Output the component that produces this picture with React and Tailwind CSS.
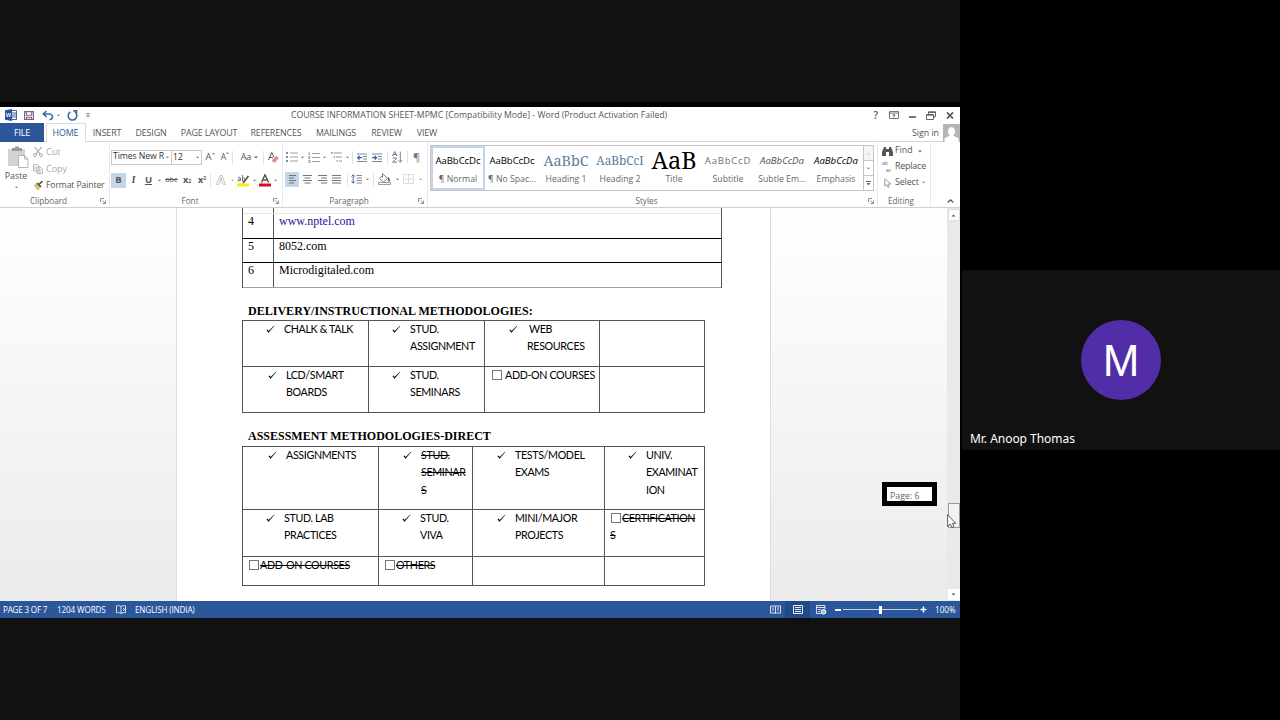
import clsx from 'clsx'

const tabs = [
  { name: 'INSERT', width: 'w-[42px]' },
  { name: 'DESIGN', width: 'w-[46px]' },
  { name: 'PAGE LAYOUT', width: 'w-[70px]' },
  { name: 'REFERENCES', width: 'w-[64px]' },
  { name: 'MAILINGS', width: 'w-[56px]' },
  { name: 'REVIEW', width: 'w-[45px]' },
  { name: 'VIEW', width: 'w-[36px]' }
]

const styles = [
  { name: '¶ Normal', sample: 'AaBbCcDc', look: 'pt-[4px] text-[9.6px] tracking-[-0.1px] text-black', selected: true },
  { name: '¶ No Spac...', sample: 'AaBbCcDc', look: 'pt-[4px] text-[9.6px] tracking-[-0.1px] text-black' },
  { name: 'Heading 1', sample: 'AaBbC', look: "pt-[3px] font-['Noto_Serif','Liberation_Serif',serif] text-[14.3px] text-[#5b7aa0]" },
  { name: 'Heading 2', sample: 'AaBbCcI', look: "pt-[3px] font-['Noto_Serif','Liberation_Serif',serif] text-[11.8px] text-[#5b7aa0]" },
  { name: 'Title', sample: 'AaB', look: "leading-[24px] font-['Noto_Serif','Liberation_Serif',serif] text-[23.5px] text-black" },
  { name: 'Subtitle', sample: 'AaBbCcD', look: 'pt-[4px] text-[9.5px] tracking-[0.8px] text-[#707070]' },
  { name: 'Subtle Em...', sample: 'AaBbCcDa', look: 'pt-[4px] text-[9.6px] italic text-[#505050]' },
  { name: 'Emphasis', sample: 'AaBbCcDa', look: 'pt-[4px] text-[9.6px] italic text-black' }
]

const links = [
  { no: '4', text: 'www.nptel.com', row: 'h-[25px] border-black', color: 'text-[#1c1496]' },
  { no: '5', text: '8052.com', row: 'h-[24px] border-black', color: '' },
  { no: '6', text: 'Microdigitaled.com', row: 'h-[25px] border-[#a0a0a0]', color: '' }
]

const delivery = [
  [
    { mark: 'check', pad: 'pl-[23px]', lines: ['CHALK & TALK'] },
    { mark: 'check', pad: 'pl-[23px]', lines: ['STUD.', 'ASSIGNMENT'] },
    { mark: 'check', pad: 'pl-[24px]', lines: ['WEB', 'RESOURCES'], first: 'pl-[2px]' },
    { lines: [] }
  ],
  [
    { mark: 'check', pad: 'pl-[25px]', lines: ['LCD/SMART', 'BOARDS'] },
    { mark: 'check', pad: 'pl-[23px]', lines: ['STUD.', 'SEMINARS'] },
    { mark: 'box', pad: 'pl-[7px]', gap: 'pl-[3px]', lines: ['ADD-ON COURSES'] },
    { lines: [] }
  ]
]

const assessment = [
  [
    { mark: 'check', pad: 'pl-[25px]', lines: ['ASSIGNMENTS'] },
    { mark: 'check', pad: 'pl-[24px]', lines: ['STUD.', 'SEMINAR', 'S'], strike: true },
    { mark: 'check', pad: 'pl-[24px]', lines: ['TESTS/MODEL', 'EXAMS'] },
    { mark: 'check', pad: 'pl-[23px]', lines: ['UNIV.', 'EXAMINAT', 'ION'] }
  ],
  [
    { mark: 'check', pad: 'pl-[23px]', lines: ['STUD. LAB', 'PRACTICES'] },
    { mark: 'check', pad: 'pl-[23px]', lines: ['STUD.', 'VIVA'] },
    { mark: 'check', pad: 'pl-[24px]', lines: ['MINI/MAJOR', 'PROJECTS'] },
    { mark: 'box', pad: 'pl-[6px]', gap: 'pl-px', lines: ['CERTIFICATION', 'S'], strike: true, wrap: true }
  ],
  [
    { mark: 'box', pad: 'pl-[6px]', gap: 'pl-px', lines: ['ADD-ON COURSES'], strike: true },
    { mark: 'box', pad: 'pl-[6px]', gap: 'pl-px', lines: ['OTHERS'], strike: true },
    { lines: [] },
    { lines: [] }
  ]
]

function Icon({ className, box = '0 0 12 12', children }) {
  return (
    <svg className={clsx('shrink-0', className)} viewBox={box} fill="none" stroke="currentColor">
      {children}
    </svg>
  )
}

function Caret({ className = 'w-[4px] text-[#666]' }) {
  return (
    <Icon className={clsx('h-[3px]', className)} box="0 0 4 3">
      <path d="M0 .5h4L2 2.6z" fill="currentColor" stroke="none" />
    </Icon>
  )
}

function Slot({ className, children }) {
  return <span className={clsx('flex h-[15px] shrink-0 items-center justify-center', className)}>{children}</span>
}

function Sep() {
  return <span className="h-[13px] w-px shrink-0 bg-[#e2e2e2]" />
}

function Launcher() {
  return (
    <Icon className="size-[6px] text-[#777]" box="0 0 6 6">
      <path d="M.5 4V.5H4M2.5 2.5l2.5 2.5M5.5 2.5v3h-3" strokeWidth=".8" />
    </Icon>
  )
}

function Group({ name, className, launcher, children }) {
  return (
    <div className={clsx('flex shrink-0 flex-col border-r border-[#e9e9e9]', className)}>
      <div className="h-[53px]">{children}</div>
      <div className="flex h-[12px] items-center pr-[3px] text-[8.2px] text-[#666]">
        <span className="flex-1 pr-[3px] text-center leading-[12px]">{name}</span>
        {launcher && <Launcher />}
      </div>
    </div>
  )
}

function Lines({ d = 'M0 1.5h9M0 4h9M0 6.5h9M0 9h9', className = 'text-[#666]' }) {
  return (
    <Icon className={clsx('h-[10px] w-[9px]', className)} box="0 0 9 10">
      <path d={d} strokeWidth=".9" />
    </Icon>
  )
}

function TitleBar() {
  return (
    <div className="flex h-[16px] items-center text-[#555]">
      <div className="flex w-[291px] items-center pl-[5px]">
        <Icon className="h-[12px] w-[12px]">
          <path d="M5 1.5h6.5v9H5M7 4h4M7 6h4M7 8h4" stroke="#2b579a" strokeWidth=".9" />
          <path d="M0 1.2 7 0v12L0 10.8z" fill="#2b579a" stroke="none" />
          <path d="m1.3 4 1 4 1.2-4 1.2 4 1-4" stroke="#fff" strokeWidth=".8" />
        </Icon>
        <Icon className="ml-[7px] h-[9px] w-[10px] text-[#80608a]" box="0 0 10 9">
          <path d="M.6.6h8.800v7.800H.6zM2.300.8v3.400h5.400V.8M2.500 8.200V6.300h5v1.900" strokeWidth="1.100" />
        </Icon>
        <Icon className="ml-[8px] h-[11px] w-[12px] text-[#3c6c9f]" box="0 0 12 11">
          <path d="M4.500 1 1.300 4l3.400 3M1.500 4h5.200c3 0 4 1.500 3.800 3.200C10.300 8.700 9 9.500 7.500 9.700" strokeWidth="1.600" />
        </Icon>
        <Slot className="w-[9px]"><Caret className="w-[3px] text-[#666]" /></Slot>
        <Icon className="ml-[4px] h-[11px] w-[11px] text-[#3c6c9f]" box="0 0 11 11">
          <path d="M3.300 2A4.300 4.300 0 1 0 8 2.200M6.300.9h3.200v3.300" strokeWidth="1.600" />
        </Icon>
        <Icon className="ml-[8px] h-[5px] w-[4px] text-[#777]" box="0 0 4 5">
          <path d="M.2.5h3.600M.5 2.300h3L2 4.300z" strokeWidth=".7" />
        </Icon>
      </div>
      <span className="w-[376px] pt-px text-center text-[8.700px] whitespace-nowrap text-[#555]">
        COURSE INFORMATION SHEET-MPMC [Compatibility Mode] - Word (Product Activation Failed)
      </span>
      <div className="flex flex-1 items-center justify-end pr-[6px]">
        <span className="text-[10px] font-semibold">?</span>
        <Icon className="ml-[11px] h-[8px] w-[10px]" box="0 0 10 8">
          <path d="M.5.5h9v7h-9zM.5 2h9M5 6.500V3.200M3.500 4.600 5 3.200l1.500 1.400" strokeWidth=".8" />
        </Icon>
        <span className="mt-[3px] ml-[10px] h-[2px] w-[7px] bg-[#777]" />
        <Icon className="ml-[10px] h-[9px] w-[10px]" box="0 0 10 9">
          <path d="M.5 3.500h7v5h-7zM.5 4.200h7M2.500 3.200V.8h7v5H8M2.500 1.400h7" strokeWidth=".9" />
        </Icon>
        <Icon className="ml-[10px] h-[7px] w-[8px]" box="0 0 8 7">
          <path d="m1 .5 6 6M7 .5l-6 6" strokeWidth="1.700" />
        </Icon>
      </div>
    </div>
  )
}

function TabBar() {
  return (
    <div className="flex h-[19px] text-[8.900px] tracking-[-0.15px] text-[#555]">
      <div className="flex w-[44px] items-center justify-center bg-[#2b579a] pt-px text-white">FILE</div>
      <div className="w-[2px] border-b border-[#d5d5d5]" />
      <div className="flex w-[40px] items-center justify-center border-x border-t border-[#dcdcdc] pr-px text-[#2b579a]">HOME</div>
      <div className="flex flex-1 items-center border-b border-[#d5d5d5] pt-px">
        {tabs.map((tab) => (
          <span key={tab.name} className={clsx('text-center whitespace-nowrap', tab.width)}>{tab.name}</span>
        ))}
        <span className="ml-auto pr-[4px] tracking-[-0.05px]">Sign in</span>
        <Icon className="h-[18px] w-[17px]" box="0 0 17 18">
          <path d="M0 0h17v18H0z" fill="#b5b5b5" stroke="none" />
          <path d="M8.500 3a4 4.300 0 0 1 2 7.800v1l5 2.500V18h-14v-3.700l5-2.500v-1A4 4.300 0 0 1 8.500 3z" fill="#fff" stroke="none" />
        </Icon>
      </div>
    </div>
  )
}

function Clipboard() {
  return (
    <Group name="Clipboard" className="w-[110px]" launcher>
      <div className="flex h-full pt-[3px] pl-[4px] text-[#555]">
        <div className="flex w-[24px] flex-col items-center text-[8.900px]">
          <Icon className="mr-[-4px] h-[24px] w-[22px]" box="0 0 22 24">
            <path d="M1 4h17v17H1z" fill="#d2d2d2" stroke="none" />
            <path d="M5 3h3V1.500h4V3h3v3H5z" fill="#999" stroke="none" />
            <path d="M11.500 10.500h6l3.500 3.500v8.500h-9.500z" fill="#fff" stroke="#b5b5b5" />
            <path d="M17.500 10.500V14H21" stroke="#b5b5b5" />
          </Icon>
          <span className="leading-[13px]">Paste</span>
          <Caret className="mt-[4px] w-[3px] text-[#666]" />
        </div>
        <div className="flex flex-col pl-[5px] text-[9px] whitespace-nowrap">
          <span className="flex h-[14px] items-center text-[#aaa]">
            <Icon className="mr-[3px] h-[10px] w-[10px] text-[#aaa]" box="0 0 10 10">
              <path d="M1.500 0 7 7M8.500 0 3 7" strokeWidth="1.200" />
              <circle cx="2" cy="8" r="1.500" /><circle cx="8" cy="8" r="1.500" />
            </Icon>
            Cut
          </span>
          <span className="mt-[2px] flex h-[16px] items-center text-[#aaa]">
            <Icon className="mr-[3px] h-[10px] w-[10px] text-[#b5b5b5]" box="0 0 10 10">
              <path d="M.5.5h4l1.500 1.500v5H.5zM4 3h3.500L9.500 5v4.500H4zM5.500 6h2.500M5.500 8h2.500M1.500 3h2M1.500 5h2" fill="#fff" />
            </Icon>
            Copy
          </span>
          <span className="flex h-[17px] items-center text-[8.600px] tracking-[-0.1px]">
            <Icon className="mr-[3px] ml-px h-[9px] w-[9px]" box="0 0 9 9">
              <path d="m1 3 3-1 3 3-2 4H3L0 5z" fill="#e3c27a" stroke="none" />
              <path d="m3 2 4 4M5 3.500 8.500 0" stroke="#555" strokeWidth="1.700" />
            </Icon>
            Format Painter
          </span>
        </div>
      </div>
    </Group>
  )
}

function FontGroup() {
  return (
    <Group name="Font" className="w-[173px]" launcher>
      <div className="flex flex-col pt-[7px] pl-px text-[#555]">
        <div className="flex h-[16px] items-center">
          <span className="flex h-[15px] w-[62px] items-center justify-between border border-[#c8c8c8] pr-[2px] pl-px text-[8.700px] tracking-[-0.1px] whitespace-nowrap text-[#333]">
            Times New R <Caret className="w-[3px] text-[#666]" />
          </span>
          <span className="flex h-[15px] w-[31px] items-center justify-between border border-l-0 border-[#c8c8c8] pr-[2px] pl-px text-[9px] text-[#333]">
            12 <Caret className="w-[3px] text-[#666]" />
          </span>
          <Slot className="w-[16px] text-[9.500px]">A<Caret className="mb-[7px] w-[3px] rotate-180 text-[#666]" /></Slot>
          <Slot className="w-[14px] text-[8.500px]">A<Caret className="mb-[7px] w-[3px] text-[#666]" /></Slot>
          <Sep />
          <Slot className="ml-[3px] w-[27px] gap-[3px] text-[9px]">Aa<Caret /></Slot>
          <Sep />
          <Slot className="w-[18px]">
            <Icon className="h-[11px] w-[11px]" box="0 0 11 11">
              <path d="M.5 8 3.800.5 6 5M1.500 5.500H5" strokeWidth="1" />
              <path d="m4 8 4-4 3 2-4 4.500H5z" fill="#dd8f9c" stroke="none" />
            </Icon>
          </Slot>
        </div>
        <div className="mt-[7px] flex h-[16px] items-center">
          <Slot className="w-[15px] bg-[#c5d5ea] text-[9.500px] font-bold">B</Slot>
          <Slot className="w-[15px] font-serif text-[10px] font-bold italic">I</Slot>
          <Slot className="w-[15px] text-[9.500px] font-bold underline">U</Slot>
          <Slot className="w-[7px]"><Caret className="w-[3px] text-[#666]" /></Slot>
          <Slot className="w-[17px] text-[7.500px] line-through">abc</Slot>
          <Slot className="w-[14px] text-[9px] font-bold">x<sub className="text-[5px]">2</sub></Slot>
          <Slot className="w-[16px] text-[9px] font-bold">x<sup className="text-[5px]">2</sup></Slot>
          <Sep />
          <Slot className="w-[19px]">
            <Icon className="h-[10px] w-[10px] text-[#b5b5b5]" box="0 0 10 10">
              <path d="M.5 9.500 4 .5h2l3.500 9H7.500l-.8-2.300H3.300l-.8 2.300zM4 5.500h2L5 2.500z" strokeWidth=".8" />
            </Icon>
          </Slot>
          <Slot className="w-[5px]"><Caret className="w-[3px] text-[#999]" /></Slot>
          <Slot className="w-[17px]">
            <Icon className="h-[13px] w-[13px]" box="0 0 13 13">
              <path d="M0 9.500h12V12.500H0z" fill="#f8f000" stroke="none" />
              <path d="M1 3.500c3-1 2.500 1 2.500 3.500M3.500 5C0 5 .5 7 1.500 7s2-1 2-2M5.500 1v6c3 .5 3-4 0-3" strokeWidth=".8" />
              <path d="m6 9 5.500-7" strokeWidth="1.700" />
            </Icon>
          </Slot>
          <Slot className="w-[5px]"><Caret className="w-[3px] text-[#666]" /></Slot>
          <Slot className="w-[15px]">
            <Icon className="h-[13px] w-[12px]" box="0 0 12 13">
              <path d="M0 9.500h12V12.500H0z" fill="#d80f1c" stroke="none" />
              <path d="M2.500 8.500 6 .8l3.500 7.700M4 6h4" strokeWidth="1.500" />
            </Icon>
          </Slot>
          <Slot className="w-[7px]"><Caret className="w-[3px] text-[#666]" /></Slot>
        </div>
      </div>
    </Group>
  )
}

function Paragraph() {
  return (
    <Group name="Paragraph" className="w-[145px]" launcher>
      <div className="flex flex-col pt-[7px] pl-[2px] text-[#777]">
        <div className="flex h-[16px] items-center">
          <Slot className="w-[14px]">
            <Icon className="h-[10px] w-[12px]" box="0 0 12 10">
              <path d="M0 1h2M0 5h2M0 9h2" stroke="#3c6c9f" strokeWidth="1.700" />
              <path d="M4 1h8M4 5h8M4 9h8" strokeWidth=".7" />
            </Icon>
          </Slot>
          <Slot className="w-[7px]"><Caret className="w-[3px] text-[#666]" /></Slot>
          <Slot className="w-[15px]">
            <Icon className="h-[11px] w-[12px]" box="0 0 12 11">
              <path d="M1.200 0v3M.5 4.500h1.500L.5 6.500H2M.5 8.500H2v2H.5" stroke="#3c6c9f" strokeWidth=".7" />
              <path d="M4 1.500h8M4 5.500h8M4 9.500h8" strokeWidth=".7" />
            </Icon>
          </Slot>
          <Slot className="w-[7px]"><Caret className="w-[3px] text-[#666]" /></Slot>
          <Slot className="w-[16px]">
            <Icon className="h-[10px] w-[11px]" box="0 0 11 10">
              <path d="M0 .8h1.500M2.500 5H4M5.500 9H7" stroke="#3c6c9f" strokeWidth="1.200" />
              <path d="M2.500 1h8M5 5h6M8 9h3" strokeWidth=".8" />
            </Icon>
          </Slot>
          <Slot className="w-[6px]"><Caret className="w-[3px] text-[#666]" /></Slot>
          <Slot className="ml-[2px] w-px"><Sep /></Slot>
          <Slot className="w-[18px]">
            <Icon className="h-[9px] w-[10px]" box="0 0 10 9">
              <path d="M0 1h10M6 3.500h4M6 6h4M0 8.500h10" strokeWidth=".9" />
              <path d="M5.200 4.700H.8M2.500 2.800.7 4.700l1.800 1.800" stroke="#3c6c9f" strokeWidth="1.300" />
            </Icon>
          </Slot>
          <Slot className="w-[12px]">
            <Icon className="h-[9px] w-[10px]" box="0 0 10 9">
              <path d="M0 1h10M6 3.500h4M6 6h4M0 8.500h10" strokeWidth=".9" />
              <path d="M0 4.700h4.500M2.700 2.800l1.800 1.900-1.800 1.800" stroke="#3c6c9f" strokeWidth="1.300" />
            </Icon>
          </Slot>
          <Slot className="ml-[4px] w-px"><Sep /></Slot>
          <Slot className="w-[19px]">
            <Icon className="h-[12px] w-[11px]" box="0 0 11 12">
              <path d="M.5 5 2.700.5 5 5M1.200 3.500h3" stroke="#3c6c9f" strokeWidth=".9" />
              <path d="M.7 7H5l-4.300 4.200H5" stroke="#7a5a8a" strokeWidth=".9" />
              <path d="M8.300.5v10.700M6.300 9.200l2 2 2-2" strokeWidth=".9" />
            </Icon>
          </Slot>
          <Slot className="w-px"><Sep /></Slot>
          <Slot className="w-[17px] text-[11px]">¶</Slot>
        </div>
        <div className="mt-[6px] flex h-[16px] items-center">
          <Slot className="w-[14px] bg-[#c5d5ea]"><Lines d="M1 1.500h7M1 4h5M1 6.500h7M1 9h5" /></Slot>
          <Slot className="w-[16px]"><Lines d="M0 1.500h9M1.500 4h6M0 6.500h9M1.500 9h6" /></Slot>
          <Slot className="w-[14px]"><Lines d="M0 1.500h9M3 4h6M0 6.500h9M3 9h6" /></Slot>
          <Slot className="w-[15px]"><Lines /></Slot>
          <Slot className="ml-[3px] w-px"><Sep /></Slot>
          <Slot className="w-[17px]">
            <Icon className="h-[10px] w-[11px]" box="0 0 11 10">
              <path d="M2.200.8v8.400M.5 2.500 2.200.8l1.700 1.700M.5 7.500l1.700 1.700 1.700-1.700" stroke="#3c6c9f" />
              <path d="M5.500 1.500H11M5.500 4H11M5.500 6.500H11M5.500 9H11" strokeWidth=".9" />
            </Icon>
          </Slot>
          <Slot className="w-[5px]"><Caret className="w-[3px] text-[#666]" /></Slot>
          <Slot className="ml-[3px] w-px"><Sep /></Slot>
          <Slot className="w-[21px]">
            <Icon className="h-[12px] w-[13px]" box="0 0 13 12">
              <path d="m1.500 5.500 4-4 4 4-4 3.500zM4.500.5v4" />
              <path d="M10 4.500c2 1.500 2 3 1 4z" fill="#3c6c9f" stroke="#3c6c9f" />
              <path d="M.5 9.500h12v2H.5z" strokeWidth=".7" />
            </Icon>
          </Slot>
          <Slot className="w-[4px]"><Caret className="w-[3px] text-[#666]" /></Slot>
          <Slot className="w-[19px]">
            <Icon className="h-[10px] w-[11px] text-[#ccc]" box="0 0 11 10">
              <path d="M.5.5h10v9H.5zM5.500.5v9M.5 5h10" strokeDasharray="1.500 .7" />
            </Icon>
          </Slot>
          <Slot className="w-[5px]"><Caret className="w-[3px] text-[#888]" /></Slot>
        </div>
      </div>
    </Group>
  )
}

function Styles() {
  return (
    <Group name="Styles" className="w-[450px]" launcher>
      <div className="pt-[3px] pl-[2px]">
        <div className="flex h-[46px] w-[444px] border border-[#c6c6c6] bg-white">
          {styles.map((s) => (
            <div
              key={s.name}
              className={clsx(
                'flex w-[54px] shrink-0 flex-col items-center whitespace-nowrap',
                s.selected && 'shadow-[inset_0_0_0_2px_#c3d3e8]'
              )}
            >
              <span className={clsx('flex h-[27px] items-center', s.look)}>{s.sample}</span>
              <span className="text-[8.700px] leading-[12px] text-[#666]">{s.name}</span>
            </div>
          ))}
          <div className="flex flex-1 flex-col divide-y divide-[#c6c6c6] border-l border-[#c6c6c6]">
            <span className="flex flex-1 items-center justify-center bg-[#f4f4f4]"><Caret className="w-[3px] rotate-180 text-[#bbb]" /></span>
            <span className="flex flex-1 items-center justify-center"><Caret className="w-[3px] text-[#666]" /></span>
            <span className="flex flex-1 items-center justify-center">
              <Icon className="h-[5px] w-[5px] text-[#666]" box="0 0 5 5">
                <path d="M0 .5h5" /><path d="M.5 2h4L2.500 4.500z" fill="currentColor" stroke="none" />
              </Icon>
            </span>
          </div>
        </div>
      </div>
    </Group>
  )
}

function Editing() {
  return (
    <Group name="Editing" className="w-[53px]">
      <div className="flex flex-col pt-px pl-[4px] text-[8.800px] whitespace-nowrap text-[#555]">
        <span className="flex h-[16px] items-center">
          <Icon className="mr-[2px] h-[9px] w-[11px]" box="0 0 11 9">
            <path d="M2 0h2v2h3V0h2l2 5v4H7V5H4v4H0V5z" fill="#555" stroke="none" />
          </Icon>
          Find
          <Slot className="ml-[3px] w-[8px]"><Caret /></Slot>
        </span>
        <span className="flex h-[16px] items-center tracking-[-0.15px]">
          <span className="mr-[2px] flex w-[11px] flex-col text-[5px] leading-[7px] text-[#3c6c9f]">
            <span>ab</span>
            <span className="pl-[4px] text-[#555]">ac</span>
          </span>
          Replace
        </span>
        <span className="flex h-[15px] items-center tracking-[-0.1px]">
          <Icon className="mr-[3px] ml-[2px] h-[10px] w-[8px] text-[#888]" box="0 0 8 10">
            <path d="M.8.8v7.400l2-1.700L4 9.500l1.300-.6L4.200 6h2.700z" strokeWidth=".8" />
          </Icon>
          Select
          <Slot className="ml-[2px] w-[5px]"><Caret className="w-[3px] text-[#666]" /></Slot>
        </span>
      </div>
    </Group>
  )
}

function Check() {
  return (
    <Icon className="mt-[4px] mr-[9px] h-[9px] w-[9px] text-black" box="0 0 9 9">
      <path d="M.8 5.200 2.500 7.600 8 .9 2.600 6.300 1.600 4.800z" fill="currentColor" strokeWidth=".4" />
    </Icon>
  )
}

function Cell({ cell, className }) {
  return (
    <div className={clsx('flex border-r border-b border-[#555]', cell.pad, className)}>
      {cell.mark === 'check' && <Check />}
      {cell.mark === 'box' && <span className="mt-[3px] size-[10px] shrink-0 border border-[#777]" />}
      <div className={clsx('-mt-[1.5px] whitespace-nowrap', cell.gap, cell.strike && 'line-through')}>
        {cell.lines.map((line, i) => (
          <div key={line} className={clsx(i === 0 && cell.first, i === 1 && cell.wrap && '-ml-[12px]')}>{line}</div>
        ))}
      </div>
    </div>
  )
}

function Grid({ rows, columns, heights }) {
  return (
    <div className="w-[463px] border-t border-l border-[#555] font-['Lato','Liberation_Sans',sans-serif] text-[10.700px] leading-[17.500px] tracking-[-0.35px] text-black">
      {rows.map((row, i) => (
        <div key={i} className={clsx('flex', heights[i])}>
          {row.map((cell, j) => (
            <Cell key={j} cell={cell} className={columns[j]} />
          ))}
        </div>
      ))}
    </div>
  )
}

function Page() {
  return (
    <div className="ml-[176px] w-[595px] shrink-0 overflow-hidden border-x border-[#dcdcdc] bg-white pl-[65px] font-['Liberation_Serif',serif] text-black">
      <div className="w-[480px] border-x border-[#555] text-[12px]">
        <div className="flex h-[6px] border-b border-[#e6e6e6]">
          <span className="w-[31px] border-r border-[#555]" />
        </div>
        {links.map((link) => (
          <div key={link.no} className={clsx('flex border-b leading-[15px]', link.row)}>
            <span className="w-[31px] border-r border-[#555] pl-[5px]">{link.no}</span>
            <span className={clsx('pl-[5px]', link.color)}>{link.text}</span>
          </div>
        ))}
      </div>
      <h2 className="mt-[15px] h-[17px] pl-[6px] text-[12px] leading-[17px] font-bold tracking-[0.02px] whitespace-nowrap">
        DELIVERY/INSTRUCTIONAL METHODOLOGIES:
      </h2>
      <Grid
        rows={delivery}
        columns={['w-[126px]', 'w-[116px]', 'w-[115px]', 'w-[105px]']}
        heights={['h-[46px]', 'h-[46px]']}
      />
      <h2 className="mt-[15px] h-[18px] pl-[6px] text-[12px] leading-[16px] font-bold whitespace-nowrap">
        ASSESSMENT METHODOLOGIES-DIRECT
      </h2>
      <Grid
        rows={assessment}
        columns={['w-[136px]', 'w-[94px]', 'w-[132px]', 'w-[100px]']}
        heights={['h-[63px]', 'h-[47px]', 'h-[29px]']}
      />
    </div>
  )
}

function ScrollBar() {
  return (
    <div className="relative flex w-[13px] flex-col items-center bg-[#e9e9e9]">
      <span className="mt-px flex h-[12px] w-[12px] items-center justify-center border border-[#ddd] bg-white">
        <Caret className="w-[5px] rotate-180 text-[#555]" />
      </span>
      <span className="mt-[282px] h-[25px] w-[12px] border border-[#999] bg-[#f2f2f2]" />
      <span className="mt-auto mb-px flex h-[11px] w-[12px] items-center justify-center bg-white">
        <Caret className="w-[5px] text-[#555]" />
      </span>
      {/* mouse pointer over the thumb */}
      <Icon className="absolute top-[306px] left-0 h-[14px] w-[10px] text-[#333]" box="0 0 10 14">
        <path d="M.6.8v11.500L3.300 10l1.700 3.500 2-.9L5.500 9.300h3.300z" fill="#fff" strokeWidth=".8" />
      </Icon>
    </div>
  )
}

function StatusBar() {
  return (
    <div className="flex h-[17px] items-center bg-[#2b579a] text-[8.100px] whitespace-nowrap text-white">
      <span className="w-[54px] pt-px pl-[3px] tracking-[-0.2px]">PAGE 3 OF 7</span>
      <span className="w-[62px] pt-px pl-[3px] tracking-[-0.1px]">1204 WORDS</span>
      <Icon className="h-[9px] w-[11px]" box="0 0 11 9">
        <path d="M5 1.500C3.500.5 2 .5.5.8v7c1.500-.3 3-.3 4.500.7zM5 1.500C6.500.5 8 .5 9.500.8v7c-1.500-.3-3-.3-4.500.7M7 3l3 3M10 3 7 6" strokeWidth=".8" />
      </Icon>
      <span className="pt-px pl-[8px] tracking-[-0.15px]">ENGLISH (INDIA)</span>
      <div className="ml-auto flex h-full items-center">
        <Icon className="h-[9px] w-[11px]" box="0 0 11 9">
          <path d="M5.500 1v7.500M5.500 1H.5v7h5M5.500 1h5v7h-5M2 3h2M2 5h2M7 3h2M7 5h2" strokeWidth=".8" />
        </Icon>
        <span className="ml-[4px] flex h-full w-[25px] items-center justify-center bg-[#214b87]">
          <Icon className="h-[9px] w-[10px]" box="0 0 10 9">
            <path d="M.5.5h9v8h-9zM2 2.500h6M2 4.500h6M2 6.500h6" strokeWidth=".9" />
          </Icon>
        </span>
        <Icon className="ml-[6px] h-[10px] w-[11px]" box="0 0 11 10">
          <path d="M9 4V.5H.5v8H5M.5 2.500H9M2 4.500h3M2 6.500h2" strokeWidth=".8" />
          <circle cx="7.500" cy="6.800" r="2.300" fill="#fff" fillOpacity=".6" />
        </Icon>
        <span className="ml-[8px] h-[2px] w-[6px] bg-white" />
        <span className="ml-[2px] flex h-px w-[75px] items-center justify-center bg-[#c5d3e8]">
          <span className="h-[8px] w-[3px] bg-white" />
        </span>
        <Icon className="ml-[2px] h-[7px] w-[7px]" box="0 0 7 7">
          <path d="M3.500.5v6M.5 3.500h6" strokeWidth="1.500" />
        </Icon>
        <span className="w-[33px] pt-px pl-[8px]">100%</span>
      </div>
    </div>
  )
}

export default function App() {
  return (
    <div className="flex h-[720px] w-[1280px] overflow-hidden bg-black font-['Open_Sans','Noto_Sans',sans-serif]">
      <div className="flex w-[960px] flex-col bg-[#111]">
        <div className="mt-[102px] h-[5px] bg-black" />
        <div className="flex h-[511px] flex-col bg-white">
          <TitleBar />
          <TabBar />
          <div className="flex h-[66px] border-b border-[#d0d0d0]">
            <Clipboard />
            <FontGroup />
            <Paragraph />
            <Styles />
            <Editing />
            <div className="flex flex-1 items-end justify-end pr-[6px] pb-[4px]">
              <Icon className="h-[4px] w-[7px] text-[#555]" box="0 0 7 4">
                <path d="M.7 3.500 3.500.8l2.800 2.700" strokeWidth="1.200" />
              </Icon>
            </div>
          </div>
          <div className="relative flex h-[393px] bg-linear-to-b from-white to-[#ebebeb]">
            <Page />
            <div className="flex-1" />
            <ScrollBar />
            <div className="absolute top-[274px] left-[882px] flex h-[24px] w-[55px] border-5 border-black bg-white pl-[3px] text-[8.800px] leading-[18px] text-[#666]">
              Page: 6
            </div>
          </div>
          <StatusBar />
        </div>
      </div>
      <div className="flex flex-1 items-center pl-[2px]">
        <div className="flex h-[180px] flex-1 flex-col items-center bg-[#111] text-white">
          <div className="mt-[50px] flex size-[80px] shrink-0 items-center justify-center rounded-full bg-[#512da8] pt-[2px] font-['Liberation_Sans',sans-serif] text-[44px]">
            M
          </div>
          <span className="mt-[29px] self-start pt-px pl-[8px] font-['Noto_Sans',sans-serif] text-[12px] leading-[18px] tracking-[-0.03px]">
            Mr. Anoop Thomas
          </span>
        </div>
      </div>
    </div>
  )
}
